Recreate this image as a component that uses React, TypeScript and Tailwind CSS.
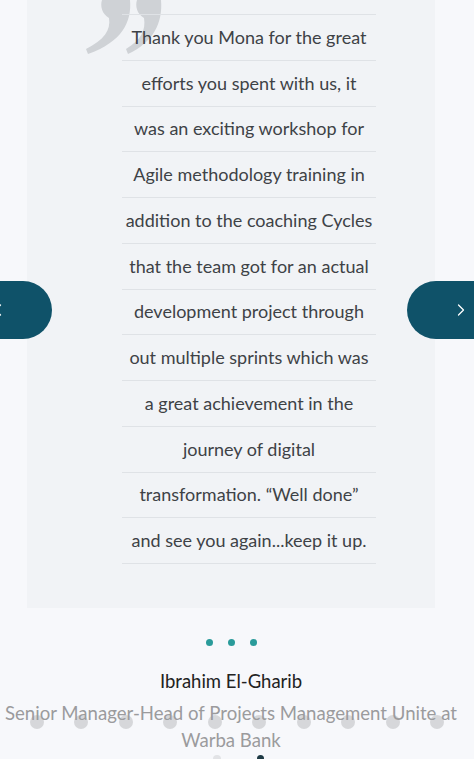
import { ChevronLeft, ChevronRight } from "lucide-react";

const lines = [
  "Thank you Mona for the great",
  "efforts you spent with us, it",
  "was an exciting workshop for",
  "Agile methodology training in",
  "addition to the coaching Cycles",
  "that the team got for an actual",
  "development project through",
  "out multiple sprints which was",
  "a great achievement in the",
  "journey of digital",
  "transformation. \u201cWell done\u201d",
  "and see you again...keep it up.",
];

// big decorative closing quote, sits behind the first line
const QuoteMark = () => (
  <svg width="80" height="56" viewBox="0 0 80 56" className="absolute left-[57px] top-0">
    <path d="M46 0 C48 22 38 42 4 54 L2 49 C20 40 27 30 25 18 C18 14 16 6 18 0 Z" fill="#cfd2d6" />
    <path d="M77 0 C79 22 70 42 44 54 L42 49 C57 40 62 30 60 18 C53 14 51 6 53 0 Z" fill="#cfd2d6" />
  </svg>
);

export default function App() {
  return (
    <div
      className="relative min-h-[759px] overflow-hidden bg-[#f7f8fb]"
      style={{ fontFamily: "Lato, 'Open Sans', sans-serif" }}
    >
      <div className="w-[462px]">
        {/* Testimonial card */}
        <div className="relative mx-auto w-[408px] bg-[#f1f3f6] pt-[14px] pb-[44px]">
          <QuoteMark />
          <ul className="relative ml-[95px] w-[254px] border-t border-[#dfe2e6]">
            {lines.map((l) => (
              <li
                key={l}
                className="flex h-[45.75px] items-center justify-center whitespace-nowrap border-b border-[#dfe2e6] text-[18px] text-[#3e4246]"
              >
                {l}
              </li>
            ))}
          </ul>
        </div>

        {/* Carousel dots */}
        <div className="mt-[31px] flex justify-center gap-[15px]">
          <span className="h-[7px] w-[7px] rounded-full bg-[#2a9b9a]" />
          <span className="h-[7px] w-[7px] rounded-full bg-[#2a9b9a]" />
          <span className="h-[7px] w-[7px] rounded-full bg-[#2a9b9a]" />
        </div>

        {/* Author */}
        <div className="mt-[22px] text-center">
          <div className="text-[18.5px] leading-[26px] text-[#222]">Ibrahim El-Gharib</div>
          <div className="relative mt-[6px] w-[474px]">
            <div className="absolute inset-x-[30px] top-[15px] flex justify-between">
              {Array.from({ length: 10 }).map((_, i) => (
                <span key={i} className="h-[14px] w-[14px] rounded-full bg-[#d6d7da]" />
              ))}
            </div>
            <p className="relative w-[462px] whitespace-nowrap text-[18.6px] leading-[27px] text-[#9b9b9d]">
              Senior Manager-Head of Projects Management Unite at
              <br />
              Warba Bank
            </p>
          </div>
          <div className="mt-[1px] flex justify-center gap-[36px] pl-[14px]">
            <span className="h-[8px] w-[8px] rounded-full bg-[#e2e3e6]" />
            <span className="h-[7px] w-[7px] rounded-full bg-[#1e3a44]" />
          </div>
        </div>
      </div>

      {/* Nav buttons, overlaying the card edges */}
      <button className="absolute left-[-50px] top-[281px] flex h-[58px] w-[102px] items-center justify-end rounded-full bg-[#0f5269] pr-[44px] text-white">
        <ChevronLeft size={20} strokeWidth={1.5} />
      </button>
      <button className="absolute left-[407px] top-[281px] flex h-[58px] w-[110px] items-center justify-start rounded-full bg-[#0f5269] pl-[44px] text-white">
        <ChevronRight size={20} strokeWidth={1.5} />
      </button>
    </div>
  );
}
